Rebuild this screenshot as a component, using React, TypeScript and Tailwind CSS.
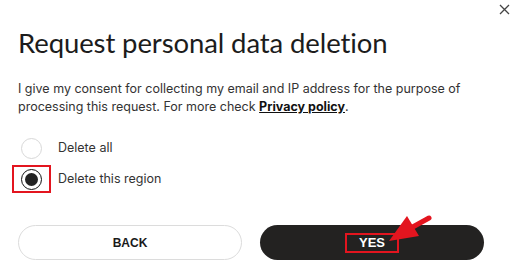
import React from "react";

export default function App() {
  return (
    <div className="relative w-[515px] h-[273px] bg-white overflow-hidden" style={{ fontFamily: "Inter, 'Liberation Sans', sans-serif" }}>
      <button className="absolute right-[5px] top-[3px] w-[12px] h-[12px] flex items-center justify-center">
        <svg width="11" height="11" viewBox="0 0 11 11">
          <path d="M1 1L10 10M10 1L1 10" stroke="#444" strokeWidth="1.3" />
        </svg>
      </button>
      <div className="flex flex-col px-[18px] pt-[26px]">
        <h1 className="text-[27.5px] leading-[34px] text-[#1c1c1c] font-normal tracking-[-0.1px]" style={{ fontFamily: "Lato, sans-serif" }}>
          Request personal data deletion
        </h1>
        <p className="mt-[20px] text-[12.5px] leading-[18px] text-[#333]">
          I give my consent for collecting my email and IP address for the purpose of processing this request. For more check{" "}
          <a className="font-bold underline text-[#111]">Privacy policy</a>.
        </p>
        <div className="mt-[22px] flex flex-col gap-[10px]">
          <label className="flex items-center gap-[16px] pl-[3px]">
            <span className="w-[21px] h-[21px] rounded-full border border-[#d8d8d8] bg-white" />
            <span className="text-[12.5px] text-[#333]">Delete all</span>
          </label>
          <label className="flex items-center gap-[16px] pl-[3px]">
            <span className="relative w-[21px] h-[21px] shrink-0">
              <span className="absolute inset-0 rounded-full border-[1.5px] border-[#111] bg-white" />
              <span className="absolute left-[4px] top-[4px] w-[13px] h-[13px] rounded-full bg-[#222]" />
              <span className="absolute left-[-9px] top-[-4px] w-[39px] h-[28px] border-2 border-[#e3151f]" />
            </span>
            <span className="text-[12.5px] text-[#333]">Delete this region</span>
          </label>
        </div>
        <div className="mt-[35px] flex gap-[18px]">
          <button className="w-[224px] h-[35px] rounded-full border border-[#dcdcdc] bg-white text-[12px] font-bold text-[#1a1a1a]" style={{ fontFamily: "'Liberation Sans', Arial, sans-serif" }}>
            BACK
          </button>
          <button className="relative w-[224px] h-[35px] rounded-full bg-[#232221] text-[13px] font-bold text-white flex items-center justify-center" style={{ fontFamily: "'Liberation Sans', Arial, sans-serif" }}>
            <span className="border-2 border-[#e3151f] w-[54px] h-[20px] flex items-center justify-center">YES</span>
          </button>
        </div>
      </div>
      <svg className="absolute left-0 top-0 pointer-events-none" width="515" height="273">
        <line x1="429" y1="218" x2="400" y2="234" stroke="#e3151f" strokeWidth="5" strokeLinecap="round" />
        <polygon points="389,241 407,216 419,236" fill="#e3151f" />
      </svg>
    </div>
  );
}
